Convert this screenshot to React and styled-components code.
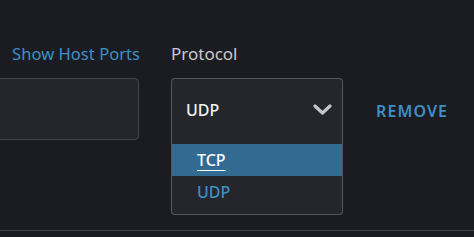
import React from 'react'
import { styled, createGlobalStyle } from 'styled-components'

const Global = createGlobalStyle`
body{
  margin:0;
  background:#1b1c21;
  font-family:"Noto Sans","Open Sans",sans-serif;
}
`

const Page = styled.div`
width:474px;
height:237px;
overflow:hidden;
position:relative;
`

const Row = styled.div`
display:flex;
align-items:flex-start;
padding-top:42px;
margin-left:-30px;
`

const Column = styled.div`
display:flex;
flex-direction:column;
width:${p => p.$w}px;
margin-right:${p => p.$mr || 0}px;
`

const Label = styled.div`
height:27px;
display:flex;
justify-content:${p => p.$end ? 'flex-end' : 'flex-start'};
font-size:${p => p.$link ? '16.6px' : '17px'};
color:${p => p.$link ? '#3d8fc6' : '#c9cacd'};
margin-bottom:9px;
margin-right:${p => p.$end ? '-1px' : '0'};
`

const Input = styled.div`
height:60px;
background:#25262b;
border:1px solid #45464c;
border-radius:4px;
`

const SelectWrap = styled.div`
position:relative;
`

const Select = styled.div`
height:62px;
box-sizing:border-box;
background:#25262b;
border:1px solid #55565c;
border-bottom:none;
border-radius:4px 4px 0 0;
display:flex;
align-items:center;
justify-content:space-between;
padding:0 10px 0 14px;
color:#f2f2f2;
font-size:16px;
font-weight:500;
`

const Menu = styled.div`
position:absolute;
left:0;
right:0;
top:62px;
height:75px;
box-sizing:border-box;
background:#25262b;
border:1px solid #55565c;
border-top:none;
border-radius:0 0 4px 4px;
padding-top:4px;
`

const Option = styled.div`
height:32px;
display:flex;
align-items:center;
padding-left:25px;
font-size:16px;
font-weight:500;
background:${p => p.$active ? '#336a91' : 'transparent'};
color:${p => p.$active ? '#ffffff' : '#3d8fc6'};
text-decoration:${p => p.$active ? 'underline' : 'none'};
text-underline-offset:4px;
`

const Remove = styled.button`
background:none;
border:none;
padding:0;
margin-top:58px;
font-family:inherit;
font-size:16px;
font-weight:600;
letter-spacing:1.1px;
color:#3d8fc6;
cursor:pointer;
`

const Divider = styled.div`
position:absolute;
left:0;
right:0;
top:230px;
height:1px;
background:#45464c;
`

const Chevron = () => (
  <svg width="19" height="11" viewBox="0 0 19 11">
    <path d="M2 2 L9.5 9 L17 2" fill="none" stroke="#c4c5c8" strokeWidth="3.2" strokeLinecap="round" strokeLinejoin="round" />
  </svg>
)

const App = () => {
  return (
    <Page>
      <Global />
      <Row>
        <Column $w={169} $mr={32}>
          <Label $link $end>Show Host Ports</Label>
          <Input />
        </Column>
        <Column $w={172} $mr={33}>
          <Label>Protocol</Label>
          <SelectWrap>
            <Select>
              UDP
              <Chevron />
            </Select>
            <Menu>
              <Option $active>TCP</Option>
              <Option>UDP</Option>
            </Menu>
          </SelectWrap>
        </Column>
        <Remove>REMOVE</Remove>
      </Row>
      <Divider />
    </Page>
  )
}

export default App
